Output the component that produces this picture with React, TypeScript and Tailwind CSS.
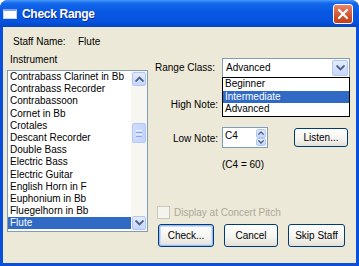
import React from "react";

const items = [
  "Contrabass Clarinet in Bb",
  "Contrabass Recorder",
  "Contrabassoon",
  "Cornet in Bb",
  "Crotales",
  "Descant Recorder",
  "Double Bass",
  "Electric Bass",
  "Electric Guitar",
  "English Horn in F",
  "Euphonium in Bb",
  "Fluegelhorn in Bb",
  "Flute",
];

function Chevron({ dir, w = 9, h = 6 }: { dir: "up" | "down"; w?: number; h?: number }) {
  return (
    <svg width={w} height={h} viewBox="0 0 9 6">
      <path
        d={dir === "down" ? "M1.2 1.2 L4.5 4.5 L7.8 1.2" : "M1.2 4.8 L4.5 1.5 L7.8 4.8"}
        stroke="#4D6185"
        strokeWidth="1.9"
        fill="none"
        strokeLinecap="square"
      />
    </svg>
  );
}

function ArrowBtn({ dir, className }: { dir: "up" | "down"; className: string }) {
  return (
    <div
      className={
        "flex items-center justify-center rounded-[2px] border border-[#B4C7F2] bg-[linear-gradient(to_bottom,#E3EBFE,#C6D6FC)] " +
        className
      }
    >
      <Chevron dir={dir} />
    </div>
  );
}

function XPButton({ label, className, def }: { label: string; className: string; def?: boolean }) {
  return (
    <div
      className={
        "flex items-center justify-center rounded-[3px] border border-[#003C74] bg-[linear-gradient(to_bottom,#FFFFFF_0%,#F4F3EE_60%,#E3E0D6_100%)] " +
        (def ? "shadow-[inset_0_0_0_1px_#9DBCF3,inset_0_0_0_2px_#CBDDFB] " : "") +
        className
      }
    >
      {label}
    </div>
  );
}

export default function App() {
  return (
    <div className="w-[359px] h-[266px] bg-white font-['Liberation_Sans',Arial,sans-serif]">
      <div className="w-[359px] h-[266px] flex flex-col rounded-t-[8px] overflow-hidden bg-[#0A4FDC]">
        {/* Title bar */}
        <div className="h-[27px] shrink-0 flex items-center pl-[3px] pr-[6px] bg-[linear-gradient(to_bottom,#4A9AF8_0%,#1368EC_12%,#0958E2_45%,#0553DE_80%,#0346C4_100%)]">
          <div className="w-[14px] h-[10px] bg-white border border-[#C9D6F0] border-t-[2px] border-t-[#7FA3E6]" />
          <span className="ml-[5px] text-white font-bold text-[12px] tracking-[-0.3px] [text-shadow:1px_1px_0_#0A2F9A]">
            Check Range
          </span>
          <div className="ml-auto w-[20px] h-[20px] rounded-[3px] border border-white bg-[linear-gradient(to_bottom,#E8866A,#D2532F_60%,#C1401C)] flex items-center justify-center">
            <svg width="12" height="12" viewBox="0 0 12 12">
              <path d="M2 2 L10 10 M10 2 L2 10" stroke="white" strokeWidth="2.2" strokeLinecap="round" />
            </svg>
          </div>
        </div>

        {/* Body */}
        <div className="flex-1 mx-[3px] mb-[3px] bg-[#ECE9D8] flex text-[10px] leading-[12px] text-black">
          {/* Left column */}
          <div className="w-[145px] pl-[4px] pt-[9px] flex flex-col">
            <div className="flex h-[12px] ml-[6px]">
              <span className="w-[65px]">Staff Name:</span>
              <span>Flute</span>
            </div>
            <div className="mt-[6px] ml-[3px] h-[12px]">Instrument</div>
            <div className="mt-[4px] w-[141px] h-[162px] border border-[#7F9DB9] bg-white flex">
              <div className="w-[123px] flex flex-col">
                {items.map((it, i) => (
                  <div
                    key={it}
                    className={
                      "h-[12.2px] leading-[12.2px] pl-[2px] whitespace-nowrap " +
                      (i === items.length - 1 ? "bg-[#316AC5] text-white" : "")
                    }
                  >
                    {it}
                  </div>
                ))}
              </div>
              <div className="w-[16px] bg-[#F7F6F1] flex flex-col p-[1px]">
                <ArrowBtn dir="up" className="h-[14px] w-[14px]" />
                <div className="h-[37px]" />
                <div className="h-[20px] w-[14px] rounded-[2px] border border-[#B4C7F2] bg-[linear-gradient(to_right,#D0DCFC,#C2D3FC)] flex flex-col items-center justify-center gap-[1px]">
                  <div className="w-[6px] h-[1px] bg-[#EEF3FE]" />
                  <div className="w-[6px] h-[1px] bg-[#8CA6E6]" />
                  <div className="w-[6px] h-[1px] bg-[#EEF3FE]" />
                  <div className="w-[6px] h-[1px] bg-[#8CA6E6]" />
                </div>
                <div className="flex-1" />
                <ArrowBtn dir="down" className="h-[14px] w-[14px]" />
              </div>
            </div>
          </div>

          {/* Right column */}
          <div className="ml-[7px] pt-[31px] flex flex-col flex-1">
            {/* Range Class */}
            <div className="flex items-center h-[20px]">
              <span className="w-[67px]">Range Class:</span>
              <div className="relative w-[128px] h-[20px]">
                <div className="w-full h-full border border-[#7F9DB9] bg-white flex items-center pl-[3px]">
                  <span>Advanced</span>
                  <ArrowBtn dir="down" className="ml-auto mr-[1px] w-[16px] h-[16px]" />
                </div>
                <div className="absolute z-10 left-0 top-[19px] w-[128px] border border-black bg-white flex flex-col">
                  <div className="h-[12.6px] leading-[12.6px] pl-[2px]">Beginner</div>
                  <div className="h-[12.6px] leading-[12.6px] pl-[2px] bg-[#316AC5] text-white">Intermediate</div>
                  <div className="h-[12.6px] leading-[12.6px] pl-[2px]">Advanced</div>
                </div>
              </div>
            </div>

            {/* High Note */}
            <div className="flex items-center h-[20px] mt-[17px]">
              <span className="w-[67px] text-right pr-[4px]">High Note:</span>
              <div className="w-[46px] h-[20px] border border-[#7F9DB9] bg-white" />
            </div>

            {/* Low Note */}
            <div className="flex items-center h-[21px] mt-[12px]">
              <span className="w-[67px] text-right pr-[4px] pt-[2px]">Low Note:</span>
              <div className="w-[46px] h-[21px] border border-[#7F9DB9] bg-white flex">
                <span className="pl-[2px] pt-[2px]">C4</span>
                <div className="ml-auto flex flex-col w-[12px] p-[1px] gap-[0px]">
                  <div className="flex-1 rounded-[2px] border border-[#B4C7F2] bg-[linear-gradient(to_bottom,#E3EBFE,#C6D6FC)] flex items-center justify-center">
                    <Chevron dir="up" w={6} h={4} />
                  </div>
                  <div className="flex-1 rounded-[2px] border border-[#B4C7F2] bg-[linear-gradient(to_bottom,#E3EBFE,#C6D6FC)] flex items-center justify-center">
                    <Chevron dir="down" w={6} h={4} />
                  </div>
                </div>
              </div>
              <XPButton label="Listen..." className="ml-[26px] w-[54px] h-[19px]" />
            </div>

            <div className="mt-[11px] ml-[67px] h-[12px]">(C4 = 60)</div>

            {/* Checkbox */}
            <div className="mt-[35px] h-[13px] flex items-center">
              <div className="ml-[2px] w-[13px] h-[13px] border border-[#CAC8BB] bg-[#F4F3EE]" />
              <span className="ml-[4px] text-[#ACA899]">Display at Concert Pitch</span>
            </div>

            {/* Buttons */}
            <div className="mt-[5px] flex">
              <XPButton label="Check..." def className="ml-[3px] w-[56px] h-[23px]" />
              <XPButton label="Cancel" className="ml-[10px] w-[54px] h-[23px]" />
              <XPButton label="Skip Staff" className="ml-[10px] w-[57px] h-[23px]" />
            </div>
          </div>
        </div>
      </div>
    </div>
  );
}
